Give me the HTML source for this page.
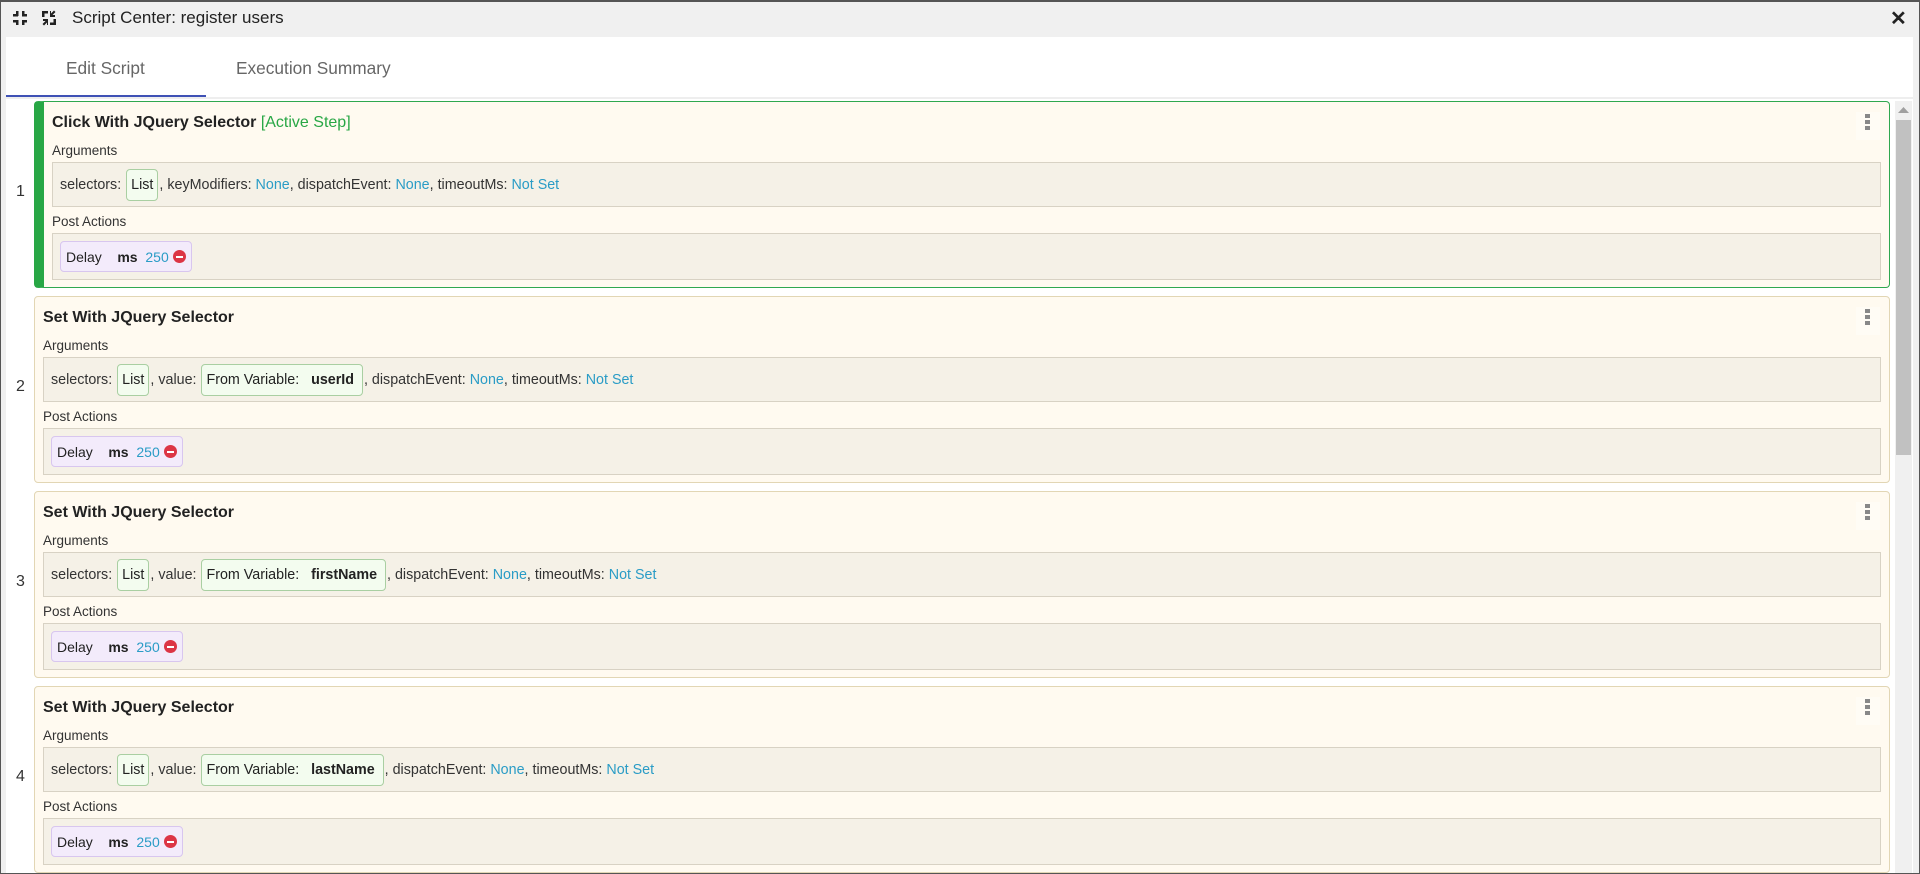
<!DOCTYPE html>
<html><head><meta charset="utf-8"><style>
*{box-sizing:border-box;margin:0;padding:0}
body{width:1920px;height:874px;overflow:hidden;background:#f0f0f0;font-family:"Liberation Sans",sans-serif;color:#222;position:relative}
.frame{position:absolute;left:0;top:0;width:1920px;height:874px;border:1px solid #555;border-top:2px solid #555}
.titlebar{position:absolute;left:0;top:0;width:1920px;height:37px;background:#f0f0f0}
.ttl{position:absolute;left:72px;top:8px;font-size:17px;color:#222}
.close{position:absolute;left:1890px;top:6px;font-size:20px;font-weight:bold}
.content{position:absolute;left:6px;top:37px;width:1907px;height:836px;background:#fff}
.tab{position:absolute;top:20px;font-size:17.3px;color:#666}
.ul{position:absolute;left:0;top:58px;width:200px;height:2px;background:#3f51b5}
.sep{position:absolute;left:0;top:60px;width:1907px;height:2px;background:#eee}
.num{position:absolute;left:16px;font-size:16px;color:#333}
.card{position:absolute;left:34px;width:1856px;height:187px;background:#fffaf0;border:1px solid #e2d6b4;border-radius:4px}
.card.active{border:1px solid #2fa84f;border-left:10px solid #28a745}
.t{position:absolute;left:8px;top:12px;font-size:16px;font-weight:bold;color:#222}
.t .g{color:#28a745;font-weight:normal}
.lab{position:absolute;left:8px;font-size:13.5px;color:#333}
.box{position:absolute;left:8px;right:8px;background:#f5f1e7;border:1px solid #d8d2c4;display:flex;align-items:center;padding-left:7px;font-size:14.3px;color:#333;white-space:pre}
.b{color:#2a9cc6}
.chip{display:inline-flex;align-items:center;height:32px;padding:0 4px;background:#f3fcef;border:1px solid #a9cfa2;border-radius:4px;color:#222;margin:0 1px}
.d{display:inline-flex;align-items:center;height:31px;padding:0 5px;background:#f3ebfb;border:1px solid #d8c6ef;border-radius:4px;color:#222;font-size:14px}
.rm{display:inline-block;width:13px;height:13px;border-radius:50%;background:#dc3545;position:relative;margin-left:4px}
.rm:after{content:"";position:absolute;left:3px;top:5.5px;width:7px;height:2px;background:#fff}
.keb{position:absolute;right:9px;top:10px;width:24px;height:28px;background:#fffcf5}
.keb i{position:absolute;left:9px;width:5px;height:4px;background:#888}
.sb{position:absolute;left:1895px;top:101px;width:17px;height:772px;background:#f0f0f0}
.thumb{position:absolute;left:1px;top:19px;width:15px;height:335px;background:#c1c1c1}
</style></head><body>
<div class="titlebar">
<svg style="position:absolute;left:12px;top:10px" width="16" height="16" viewBox="0 0 16 16" fill="#222"><rect x="4" y="1" width="2.5" height="5"/><rect x="1" y="4" width="5" height="2.5"/><rect x="10" y="1" width="2.5" height="5"/><rect x="10" y="4" width="5" height="2.5"/><rect x="4" y="10" width="2.5" height="5"/><rect x="1" y="10" width="5" height="2.5"/><rect x="10" y="10" width="2.5" height="5"/><rect x="10" y="10" width="5" height="2.5"/></svg>
<svg style="position:absolute;left:41px;top:10px" width="16" height="16" viewBox="0 0 16 16" fill="#222"><rect x="1" y="1" width="2.5" height="6"/><rect x="1" y="1" width="6" height="2.5"/><path d="M9 7h5v-2h-2.5l3-3-1.5-1.5-3 3V1H9z"/><path d="M7 9H2v2h2.5l-3 3 1.5 1.5 3-3V15H7z"/><rect x="12.5" y="9" width="2.5" height="6"/><rect x="9" y="12.5" width="6" height="2.5"/></svg>
<div class="ttl">Script Center: register users</div>
<div class="close">✕</div>
</div>
<div class="content">
<div class="tab" style="left:60px;top:21px">Edit Script</div>
<div class="tab" style="left:230px;top:21px">Execution Summary</div>
<div class="sep"></div><div class="ul"></div>
</div>

<div class="num" style="top:183px">1</div>
<div class="card active" style="top:101px">
<div class="t">Click With JQuery Selector <span class="g">[Active Step]</span></div>
<div class="keb"><i style="top:2px"></i><i style="top:8px"></i><i style="top:14px"></i></div>
<div class="lab" style="top:41px">Arguments</div>
<div class="box" style="top:60px;height:45px">selectors: <span class="chip">List</span>, keyModifiers: <span class="b">None</span>, dispatchEvent: <span class="b">None</span>, timeoutMs: <span class="b">Not Set</span></div>
<div class="lab" style="top:112px">Post Actions</div>
<div class="box" style="top:131px;height:47px"><span class="d">Delay&nbsp;&nbsp;&nbsp;&nbsp;<b>ms</b>&nbsp;&nbsp;<span class="b">250</span><span class="rm"></span></span></div>
</div>

<div class="num" style="top:378px">2</div>
<div class="card" style="top:296px">
<div class="t">Set With JQuery Selector</div>
<div class="keb"><i style="top:2px"></i><i style="top:8px"></i><i style="top:14px"></i></div>
<div class="lab" style="top:41px">Arguments</div>
<div class="box" style="top:60px;height:45px">selectors: <span class="chip">List</span>, value: <span class="chip">From Variable:&nbsp;&nbsp;&nbsp;<b>userId</b>&nbsp;</span>, dispatchEvent: <span class="b">None</span>, timeoutMs: <span class="b">Not Set</span></div>
<div class="lab" style="top:112px">Post Actions</div>
<div class="box" style="top:131px;height:47px"><span class="d">Delay&nbsp;&nbsp;&nbsp;&nbsp;<b>ms</b>&nbsp;&nbsp;<span class="b">250</span><span class="rm"></span></span></div>
</div>

<div class="num" style="top:573px">3</div>
<div class="card" style="top:491px">
<div class="t">Set With JQuery Selector</div>
<div class="keb"><i style="top:2px"></i><i style="top:8px"></i><i style="top:14px"></i></div>
<div class="lab" style="top:41px">Arguments</div>
<div class="box" style="top:60px;height:45px">selectors: <span class="chip">List</span>, value: <span class="chip">From Variable:&nbsp;&nbsp;&nbsp;<b>firstName</b>&nbsp;</span>, dispatchEvent: <span class="b">None</span>, timeoutMs: <span class="b">Not Set</span></div>
<div class="lab" style="top:112px">Post Actions</div>
<div class="box" style="top:131px;height:47px"><span class="d">Delay&nbsp;&nbsp;&nbsp;&nbsp;<b>ms</b>&nbsp;&nbsp;<span class="b">250</span><span class="rm"></span></span></div>
</div>

<div class="num" style="top:768px">4</div>
<div class="card" style="top:686px">
<div class="t">Set With JQuery Selector</div>
<div class="keb"><i style="top:2px"></i><i style="top:8px"></i><i style="top:14px"></i></div>
<div class="lab" style="top:41px">Arguments</div>
<div class="box" style="top:60px;height:45px">selectors: <span class="chip">List</span>, value: <span class="chip">From Variable:&nbsp;&nbsp;&nbsp;<b>lastName</b>&nbsp;</span>, dispatchEvent: <span class="b">None</span>, timeoutMs: <span class="b">Not Set</span></div>
<div class="lab" style="top:112px">Post Actions</div>
<div class="box" style="top:131px;height:47px"><span class="d">Delay&nbsp;&nbsp;&nbsp;&nbsp;<b>ms</b>&nbsp;&nbsp;<span class="b">250</span><span class="rm"></span></span></div>
</div>

<div class="sb"><svg style="position:absolute;left:3px;top:6px" width="11" height="6"><path d="M0 6L5.5 0 11 6z" fill="#a0a0a0"/></svg><div class="thumb"></div></div>
<div class="frame"></div>
</body></html>
